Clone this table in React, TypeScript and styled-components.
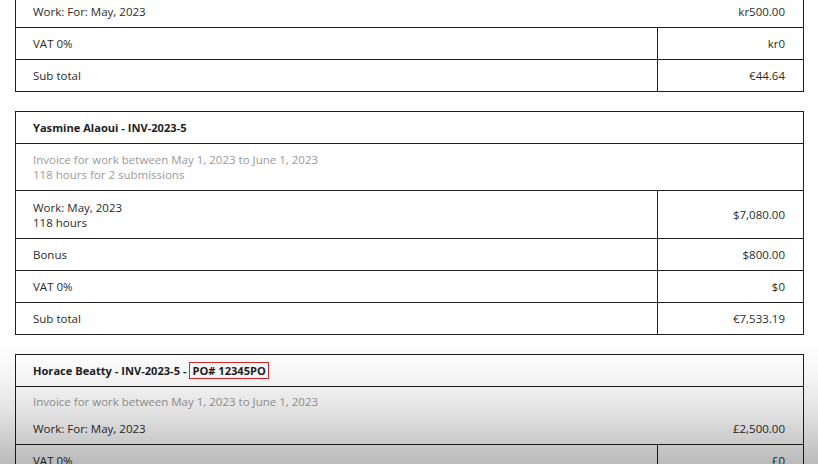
import styled, { createGlobalStyle } from "styled-components";

const GlobalStyle = createGlobalStyle`
  html, body {
    margin: 0;
    padding: 0;
    background: #ffffff;
    overflow: hidden;
  }
  body {
    font-family: "Open Sans", "Liberation Sans", sans-serif;
    color: #2b2b2b;
  }
`;

type Line = { label: string; sub?: string; amount: string; full?: boolean };

type Invoice = {
  name: string;
  number: string;
  po?: string;
  description: string[];
  lines: Line[];
};

const invoices: Invoice[] = [
  {
    name: "Lars Nilsson",
    number: "INV-2023-5",
    description: ["Invoice for work between May 1, 2023 to June 1, 2023"],
    lines: [
      { label: "Work: For: May, 2023", amount: "kr500.00", full: true },
      { label: "VAT 0%", amount: "kr0" },
      { label: "Sub total", amount: "€44.64" },
    ],
  },
  {
    name: "Yasmine Alaoui",
    number: "INV-2023-5",
    description: [
      "Invoice for work between May 1, 2023 to June 1, 2023",
      "118 hours for 2 submissions",
    ],
    lines: [
      { label: "Work: May, 2023", sub: "118 hours", amount: "$7,080.00" },
      { label: "Bonus", amount: "$800.00" },
      { label: "VAT 0%", amount: "$0" },
      { label: "Sub total", amount: "€7,533.19" },
    ],
  },
  {
    name: "Horace Beatty",
    number: "INV-2023-5",
    po: "PO# 12345PO",
    description: ["Invoice for work between May 1, 2023 to June 1, 2023"],
    lines: [
      { label: "Work: For: May, 2023", amount: "£2,500.00", full: true },
      { label: "VAT 0%", amount: "£0" },
      { label: "Sub total", amount: "£2,500.00" },
    ],
  },
];

export default function App() {
  return (
    <>
      <GlobalStyle />
      <Page>
        {invoices.map((inv, i) => {
          const [first, ...rest] = inv.lines;
          return (
            <Table key={i}>
              <Header>
                {inv.name} - {inv.number}
                {inv.po && (
                  <>
                    {" - "}
                    <PoTag>{inv.po}</PoTag>
                  </>
                )}
              </Header>
              {first.full ? (
                <Summary>
                  {inv.description.map((d) => (
                    <Muted key={d}>{d}</Muted>
                  ))}
                  <SummaryLine>
                    <span>{first.label}</span>
                    <span>{first.amount}</span>
                  </SummaryLine>
                </Summary>
              ) : (
                <>
                  <Description>
                    {inv.description.map((d) => (
                      <Muted key={d}>{d}</Muted>
                    ))}
                  </Description>
                  <Row $tall={!!first.sub}>
                    <Label>
                      <div>{first.label}</div>
                      {first.sub && <div>{first.sub}</div>}
                    </Label>
                    <Amount>{first.amount}</Amount>
                  </Row>
                </>
              )}
              {rest.map((l) => (
                <Row key={l.label}>
                  <Label>{l.label}</Label>
                  <Amount>{l.amount}</Amount>
                </Row>
              ))}
            </Table>
          );
        })}
      </Page>
      <Fade />
    </>
  );
}

const Page = styled.div`
  display: flex;
  flex-direction: column;
  gap: 19px;
  margin-top: -63px;
  padding: 0 14px 0 15px;
`;

const Table = styled.section`
  border: 1px solid #1e1e1e;
  font-size: 11.5px;
  line-height: 15px;
`;

const Header = styled.div`
  height: 31px;
  display: flex;
  align-items: center;
  padding: 0 17px;
  font-size: 11.1px;
  font-weight: 700;
  color: #1e1e1e;
  border-bottom: 1px solid #1e1e1e;
`;

const PoTag = styled.span`
  margin-left: 3px;
  padding: 0 2px;
  border: 1px solid #e0242b;
`;

const Description = styled.div`
  padding: 8px 17px;
`;

const Muted = styled.div`
  color: #9a9a9a;
`;

const Summary = styled.div`
  padding: 7px 18px 8px 17px;
`;

const SummaryLine = styled.div`
  display: flex;
  justify-content: space-between;
  margin-top: 12px;
`;

const Row = styled.div<{ $tall?: boolean }>`
  display: grid;
  grid-template-columns: 1fr 146px;
  min-height: ${(p) => (p.$tall ? 47 : 31)}px;
  border-top: 1px solid #1e1e1e;
`;

const Label = styled.div`
  display: flex;
  flex-direction: column;
  justify-content: center;
  padding: 0 17px;
`;

const Amount = styled.div`
  display: flex;
  align-items: center;
  justify-content: flex-end;
  padding: 0 18px;
  border-left: 1px solid #1e1e1e;
`;

const Fade = styled.div`
  position: fixed;
  left: 0;
  right: 0;
  bottom: 0;
  height: 125px;
  pointer-events: none;
  background: linear-gradient(
    to bottom,
    rgba(0, 0, 0, 0) 0%,
    rgba(0, 0, 0, 0.03) 25%,
    rgba(0, 0, 0, 0.1) 55%,
    rgba(0, 0, 0, 0.27) 100%
  );
`;
